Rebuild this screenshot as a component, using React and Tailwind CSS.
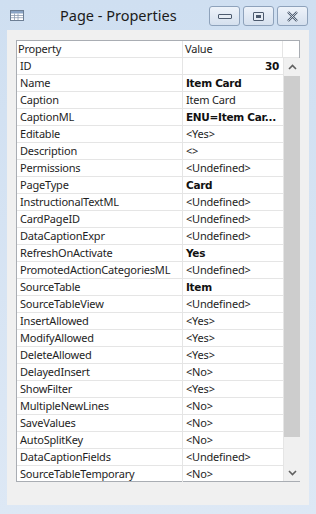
import React from "react";

const rows = [
  { name: "ID", value: "30", bold: true, right: true },
  { name: "Name", value: "Item Card", bold: true },
  { name: "Caption", value: "Item Card" },
  { name: "CaptionML", value: "ENU=Item Car...", bold: true },
  { name: "Editable", value: "<Yes>" },
  { name: "Description", value: "<>" },
  { name: "Permissions", value: "<Undefined>" },
  { name: "PageType", value: "Card", bold: true },
  { name: "InstructionalTextML", value: "<Undefined>" },
  { name: "CardPageID", value: "<Undefined>" },
  { name: "DataCaptionExpr", value: "<Undefined>" },
  { name: "RefreshOnActivate", value: "Yes", bold: true },
  { name: "PromotedActionCategoriesML", value: "<Undefined>" },
  { name: "SourceTable", value: "Item", bold: true },
  { name: "SourceTableView", value: "<Undefined>" },
  { name: "InsertAllowed", value: "<Yes>" },
  { name: "ModifyAllowed", value: "<Yes>" },
  { name: "DeleteAllowed", value: "<Yes>" },
  { name: "DelayedInsert", value: "<No>" },
  { name: "ShowFilter", value: "<Yes>" },
  { name: "MultipleNewLines", value: "<No>" },
  { name: "SaveValues", value: "<No>" },
  { name: "AutoSplitKey", value: "<No>" },
  { name: "DataCaptionFields", value: "<Undefined>" },
  { name: "SourceTableTemporary", value: "<No>" },
];

const CaptionButton = ({ children }) => (
  <div className="w-[31px] h-[20px] rounded-[3px] border border-[#8ea2bb] bg-gradient-to-b from-[#eef3fa] to-[#d5e0ee] flex items-center justify-center">
    {children}
  </div>
);

export default function App() {
  return (
    <div
      className="w-[316px] h-[514px] bg-gradient-to-b from-[#cfdff1] to-[#dde8f5] flex flex-col overflow-hidden"
      style={{ fontFamily: "'Noto Sans', 'Open Sans', sans-serif" }}
    >
      {/* title bar */}
      <div className="h-[30px] flex items-center shrink-0">
        <svg className="ml-[10px]" width="14" height="11" viewBox="0 0 14 11">
          <rect x="0.5" y="0.5" width="13" height="10" fill="#fff" stroke="#6d7f95" />
          <rect x="1" y="1" width="12" height="2.5" fill="#8aa3c4" />
          <path d="M1 5.5H13M1 7.7H13M4.5 3.5V10M8 3.5V10" stroke="#8c9bb0" strokeWidth="0.8" />
        </svg>
        <span className="ml-[36px] text-[14.5px] text-[#1b1b1b] leading-none">Page - Properties</span>
        <div className="ml-auto mr-[8px] flex gap-[3px] mt-[2px]">
          <CaptionButton>
            <div className="w-[14px] h-[5px] rounded-[1px] border border-[#4c5a6e] bg-[#e6ecf4]" />
          </CaptionButton>
          <CaptionButton>
            <div className="w-[11px] h-[9px] rounded-[1px] border border-[#4c5a6e] bg-[#e6ecf4] flex items-center justify-center">
              <div className="w-[5px] h-[3px] bg-[#4c5a6e]" />
            </div>
          </CaptionButton>
          <CaptionButton>
            <svg width="13" height="11" viewBox="0 0 13 11">
              <path d="M2 1L11 10M11 1L2 10" stroke="#4c5a6e" strokeWidth="2.4" fill="none" />
              <path d="M2 1L11 10M11 1L2 10" stroke="#e6ecf4" strokeWidth="0.8" fill="none" />
            </svg>
          </CaptionButton>
        </div>
      </div>

      {/* client area */}
      <div className="mx-[7px] mb-[9px] flex-1 bg-[#f0f0f0] pt-[10px] pl-[9px]">
        <div className="w-[284px] h-[442px] border border-[#a9adb3] bg-white flex flex-col text-[11px] tracking-[-0.2px] text-[#1e1e1e]">
          {/* header */}
          <div className="h-[17px] flex border-b border-[#e5e5e5] shrink-0 leading-[16px]">
            <div className="w-[166px] border-r border-[#e5e5e5] pl-[1px]">Property</div>
            <div className="w-[100px] border-r border-[#e5e5e5] pl-[2px]">Value</div>
            <div className="flex-1" />
          </div>
          <div className="flex flex-1 min-h-0">
            <div className="flex-1 flex flex-col">
              {rows.map((r, i) => (
                <div
                  key={r.name}
                  className={`h-[17px] flex leading-[16px] ${i < rows.length - 1 ? "border-b border-[#e5e5e5]" : ""}`}
                >
                  <div className="w-[166px] border-r border-[#e5e5e5] pl-[3px] whitespace-nowrap overflow-hidden">{r.name}</div>
                  <div
                    className={`w-[100px] pl-[3px] whitespace-nowrap overflow-hidden ${r.right ? "text-right pr-[4px]" : ""} ${r.bold ? "font-bold text-[10.5px] tracking-[-0.3px] text-[#111]" : ""}`}
                    style={r.bold ? { fontFamily: "'DejaVu Sans', sans-serif" } : undefined}
                  >
                    {r.value}
                  </div>
                </div>
              ))}
            </div>
            {/* scrollbar */}
            <div className="w-[17px] bg-[#f0f0f0] flex flex-col items-center border-l border-[#e5e5e5]">
              <div className="h-[17px] flex items-center justify-center">
                <svg width="9" height="6" viewBox="0 0 9 6">
                  <path d="M1 5L4.5 1.5L8 5" stroke="#606060" strokeWidth="1.6" fill="none" />
                </svg>
              </div>
              <div className="w-[16px] h-[361px] mt-[1px] bg-[#cdcdcd]" />
              <div className="flex-1" />
              <div className="h-[17px] flex items-center justify-center">
                <svg width="9" height="6" viewBox="0 0 9 6">
                  <path d="M1 1L4.5 4.5L8 1" stroke="#606060" strokeWidth="1.6" fill="none" />
                </svg>
              </div>
            </div>
          </div>
        </div>
      </div>
    </div>
  );
}
